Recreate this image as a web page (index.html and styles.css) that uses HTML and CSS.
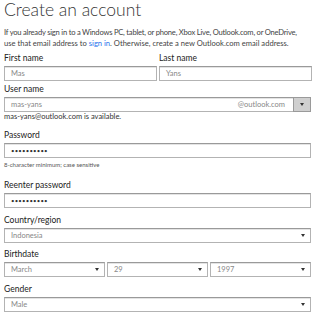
FILE: index.html
```html
<!DOCTYPE html>
<html>
<head>
<meta charset="utf-8">
<link rel="stylesheet" href="styles.css">
</head>
<body>
<div class="page">
  <h1 class="title">Create an account</h1>
  <p class="intro"><span class="l1">If you already sign in to a Windows PC, tablet, or phone, Xbox Live, Outlook.com, or OneDrive,</span><br><span class="l2">use that email address to <a class="link">sign in</a>. Otherwise, create a new Outlook.com email address.</span></p>

  <div class="row two">
    <div class="field">
      <div class="label">First name</div>
      <div class="box">Mas</div>
    </div>
    <div class="field">
      <div class="label">Last name</div>
      <div class="box">Yans</div>
    </div>
  </div>

  <div class="field f-user">
    <div class="label">User name</div>
    <div class="userrow">
      <div class="box user"><span>mas-yans</span><span class="domain">@outlook.com</span></div>
      <div class="ddbtn"><span class="tri"></span></div>
    </div>
    <div class="note">mas-yans@outlook.com is available.</div>
  </div>

  <div class="field f-pass">
    <div class="label">Password</div>
    <div class="box dots">&#8226;&#8226;&#8226;&#8226;&#8226;&#8226;&#8226;&#8226;&#8226;&#8226;</div>
    <div class="note small">8-character minimum; case sensitive</div>
  </div>

  <div class="field f-re">
    <div class="label">Reenter password</div>
    <div class="box dots">&#8226;&#8226;&#8226;&#8226;&#8226;&#8226;&#8226;&#8226;&#8226;&#8226;</div>
  </div>

  <div class="field f-country">
    <div class="label">Country/region</div>
    <div class="box select">Indonesia<span class="tri"></span></div>
  </div>

  <div class="field f-birth">
    <div class="label">Birthdate</div>
    <div class="row three">
      <div class="box select">March<span class="tri"></span></div>
      <div class="box select">29<span class="tri"></span></div>
      <div class="box select">1997<span class="tri"></span></div>
    </div>
  </div>

  <div class="field f-gender">
    <div class="label">Gender</div>
    <div class="box select">Male<span class="tri"></span></div>
  </div>
</div>
</body>
</html>
```

FILE: styles.css
```css
html, body {
  margin: 0;
  padding: 0;
  background: #ffffff;
}
.page {
  width: 307px;
  padding-left: 4px;
  font-family: Lato, "Liberation Sans", sans-serif;
  color: #222;
}
.title {
  margin: 0;
  height: 22px;
  font-family: Lato, sans-serif;
  font-weight: 300;
  font-size: 17.5px;
  line-height: 20px;
  color: #333;
}
.intro {
  margin: 5px 0 0 0;
  font-size: 7.6px;
  line-height: 10.5px;
  color: #444;
  white-space: nowrap;
  height: 25px;
}
.l1 {
  letter-spacing: -0.22px;
}
.l2 {
  letter-spacing: 0;
}
.link {
  color: #2672ec;
}
.row.two {
  display: grid;
  grid-template-columns: 153px 153px;
  column-gap: 2px;
}
.row.three {
  display: grid;
  grid-template-columns: 101px 101px 101px;
  column-gap: 2px;
}
.label {
  font-size: 8.5px;
  line-height: 12px;
  height: 12px;
  color: #222;
  margin-bottom: 2px;
}
.box {
  box-sizing: border-box;
  height: 15px;
  border: 1px solid #b3b3b3;
  border-top-color: #9a9a9a;
  box-shadow: inset 0 1px 0 #e4e4e4;
  font-size: 7.5px;
  line-height: 13px;
  color: #888;
  padding: 0 6px;
  position: relative;
  display: flex;
  align-items: center;
}
.field.f-user { margin-top: 2px; }
.userrow {
  display: flex;
}
.box.user {
  flex: 1;
  justify-content: space-between;
  border-right: none;
  padding-right: 8px;
}
.domain {
  color: #888;
}
.ddbtn {
  box-sizing: border-box;
  width: 18px;
  height: 15px;
  background: #cfcfcf;
  border: 1px solid #9a9a9a;
  display: flex;
  align-items: center;
  justify-content: center;
}
.tri {
  width: 0;
  height: 0;
  border-left: 2px solid transparent;
  border-right: 2px solid transparent;
  border-top: 3px solid #333;
}
.box.select .tri {
  position: absolute;
  right: 5px;
  top: 5px;
}
.note {
  font-size: 7.5px;
  line-height: 10px;
  color: #333;
}
.note.small {
  font-size: 6px;
  color: #555;
  margin-top: 2px;
}
.dots {
  color: #333;
  font-size: 6px;
  letter-spacing: 0.2px;
}
.field.f-pass { margin-top: 7px; }
.field.f-re { margin-top: 9px; }
.field.f-country { margin-top: 6px; }
.field.f-birth { margin-top: 5px; }
.field.f-gender { margin-top: 6px; }
```
